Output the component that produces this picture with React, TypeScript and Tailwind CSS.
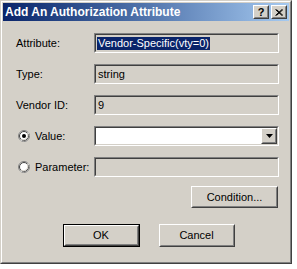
import type { ReactNode } from "react";

const font = { fontFamily: '"Liberation Sans", Arial, sans-serif' };

const Sunken = ({ white, children }: { white?: boolean; children?: ReactNode }) => (
  <div className="h-[20px] w-[185px] border border-t-[#808080] border-l-[#808080] border-b-white border-r-white">
    <div
      className={`h-full flex items-center border border-t-[#404040] border-l-[#404040] border-b-[#d4d0c8] border-r-[#d4d0c8] ${
        white ? "bg-white" : "bg-[#d4d0c8]"
      }`}
    >
      {children}
    </div>
  </div>
);

const Raised = ({ className, children }: { className?: string; children?: ReactNode }) => (
  <div className={`border border-t-white border-l-white border-b-[#404040] border-r-[#404040] bg-[#d4d0c8] ${className ?? ""}`}>
    <div className="h-full flex items-center justify-center border border-t-[#d4d0c8] border-l-[#d4d0c8] border-b-[#808080] border-r-[#808080]">
      {children}
    </div>
  </div>
);

const Radio = ({ checked }: { checked?: boolean }) => (
  <svg width="12" height="12" viewBox="0 0 12 12" className="shrink-0">
    <circle cx="6" cy="6" r="5.5" fill="#fff" stroke="#808080" />
    <path d="M10 2.5 A5.5 5.5 0 0 1 2.5 10" fill="none" stroke="#fff" />
    <circle cx="6" cy="6" r="4.5" fill="none" stroke="#404040" />
    <path d="M9.2 3 A4.5 4.5 0 0 1 3 9.2" fill="none" stroke="#d4d0c8" />
    {checked && <circle cx="6" cy="6" r="2" fill="#000" />}
  </svg>
);

const Row = ({ label, children }: { label: ReactNode; children: ReactNode }) => (
  <div className="flex items-center h-[20px]">
    <div className="w-[78px] text-[11px] text-black flex items-center">{label}</div>
    {children}
  </div>
);

export default function App() {
  return (
    <div className="w-[297px] h-[269px] bg-white" style={font}>
      <div className="w-[292px] h-[264px] bg-[#d4d0c8] border border-t-[#d4d0c8] border-l-[#d4d0c8] border-b-[#404040] border-r-[#404040]">
        <div className="h-full border border-t-white border-l-white border-b-[#808080] border-r-[#808080] p-px flex flex-col">
          {/* title bar */}
          <div className="h-[18px] flex items-center justify-between pl-[2px] pr-[2px] bg-gradient-to-r from-[#0a246a] to-[#a6caf0]">
            <span className="text-white font-bold text-[12px] leading-none">Add An Authorization Attribute</span>
            <div className="flex gap-[2px]">
              <Raised className="w-[16px] h-[14px]">
                <span className="text-[11px] font-bold leading-none text-black">?</span>
              </Raised>
              <Raised className="w-[16px] h-[14px]">
                <svg width="8" height="7" viewBox="0 0 8 7">
                  <path d="M0.5 0.5 L7 6.5 M1.5 0.5 L8 6.5 M7 0.5 L0.5 6.5 M8 0.5 L1.5 6.5" stroke="#000" strokeWidth="1" />
                </svg>
              </Raised>
            </div>
          </div>

          {/* body */}
          <div className="flex-1 flex flex-col pl-[13px] pt-[12px]">
            <div className="flex flex-col gap-[11px]">
              <Row label="Attribute:">
                <Sunken>
                  <span className="ml-[1px] text-[11px] leading-[13px] bg-[#0a246a] text-white px-px">Vendor-Specific(vty=0)</span>
                </Sunken>
              </Row>
              <Row label="Type:">
                <Sunken>
                  <span className="ml-[2px] text-[11px] text-black">string</span>
                </Sunken>
              </Row>
              <Row label="Vendor ID:">
                <Sunken>
                  <span className="ml-[2px] text-[11px] text-black">9</span>
                </Sunken>
              </Row>
              <Row
                label={
                  <span className="flex items-center gap-[5px] ml-[2px]">
                    <Radio checked />
                    Value:
                  </span>
                }
              >
                <Sunken white>
                  <div className="flex-1" />
                  <Raised className="w-[16px] h-full">
                    <svg width="7" height="4" viewBox="0 0 7 4">
                      <path d="M0 0 H7 L3.5 4 Z" fill="#000" />
                    </svg>
                  </Raised>
                </Sunken>
              </Row>
              <Row
                label={
                  <span className="flex items-center gap-[5px] ml-[2px]">
                    <Radio />
                    Parameter:
                  </span>
                }
              >
                <Sunken />
              </Row>
            </div>

            <div className="flex justify-end pr-[11px] mt-[9px]">
              <Raised className="w-[87px] h-[22px]">
                <span className="text-[11px] text-black">Condition...</span>
              </Raised>
            </div>

            <div className="flex justify-center gap-[19px] mt-[16px] pr-[8px]">
              <div className="border border-black">
                <Raised className="w-[75px] h-[21px]">
                  <span className="text-[11px] text-black">OK</span>
                </Raised>
              </div>
              <Raised className="w-[76px] h-[23px]">
                <span className="text-[11px] text-black">Cancel</span>
              </Raised>
            </div>
          </div>
        </div>
      </div>
    </div>
  );
}
